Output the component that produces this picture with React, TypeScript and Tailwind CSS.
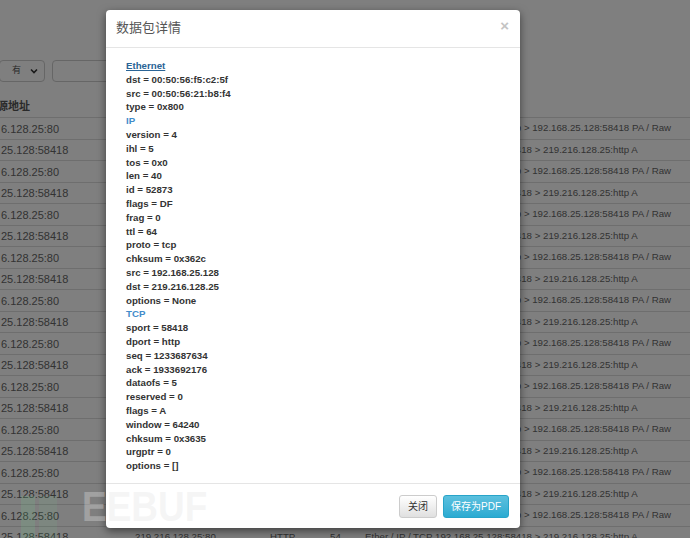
import React from "react";

const lines: { t: string; k?: "link" | "head" }[] = [
  { t: "Ethernet", k: "link" },
  { t: "dst = 00:50:56:f5:c2:5f" },
  { t: "src = 00:50:56:21:b8:f4" },
  { t: "type = 0x800" },
  { t: "IP", k: "head" },
  { t: "version = 4" },
  { t: "ihl = 5" },
  { t: "tos = 0x0" },
  { t: "len = 40" },
  { t: "id = 52873" },
  { t: "flags = DF" },
  { t: "frag = 0" },
  { t: "ttl = 64" },
  { t: "proto = tcp" },
  { t: "chksum = 0x362c" },
  { t: "src = 192.168.25.128" },
  { t: "dst = 219.216.128.25" },
  { t: "options = None" },
  { t: "TCP", k: "head" },
  { t: "sport = 58418" },
  { t: "dport = http" },
  { t: "seq = 1233687634" },
  { t: "ack = 1933692176" },
  { t: "dataofs = 5" },
  { t: "reserved = 0" },
  { t: "flags = A" },
  { t: "window = 64240" },
  { t: "chksum = 0x3635" },
  { t: "urgptr = 0" },
  { t: "options = []" },
];

function Row({ odd }: { odd: boolean }) {
  return (
    <div className="flex h-[21.5px] items-center border-b border-[#dddddd] whitespace-nowrap pt-[1px] text-[#666666]">
      <div className="w-[135px] overflow-hidden pl-[1px] text-[11px]">
        {odd ? "6.128.25:80" : "25.128:58418"}
      </div>
      <div className="w-[135px] overflow-hidden text-[9.7px]">
        {odd ? "192.168.25.128:58418" : "219.216.128.25:80"}
      </div>
      <div className="w-[60px] text-[9.7px]">HTTP</div>
      <div className="w-[35px] text-[9.7px]">{odd ? "1514" : "54"}</div>
      <div className="flex-1 text-[9.7px]">
        {odd
          ? "Ether / IP / TCP 219.216.128.25:http > 192.168.25.128:58418 PA / Raw"
          : "Ether / IP / TCP 192.168.25.128:58418 > 219.216.128.25:http A"}
      </div>
    </div>
  );
}

export default function App() {
  const rows = Array.from({ length: 20 }, (_, i) => i % 2 === 0);
  return (
    <div className="relative h-[538px] w-[690px] overflow-hidden bg-white font-['Liberation_Sans','Noto_Sans_CJK_SC',sans-serif]">
      {/* page behind the modal */}
      <div className="flex flex-col">
        <div className="h-[60px]" />
        <div className="flex h-[22px] items-center">
          <div className="ml-[-1px] flex h-[22px] w-[46px] items-center justify-between rounded-[4px] border border-[#cccccc] pl-[12px] pr-[6px]">
            <span className="text-[9px] text-[#555555]">有</span>
            <svg width="8" height="6" viewBox="0 0 8 6">
              <polyline points="1,1.5 4,4.5 7,1.5" fill="none" stroke="#333" strokeWidth="1.6" />
            </svg>
          </div>
          <div className="ml-[7px] h-[22px] w-[200px] rounded-[4px] border border-[#cccccc]" />
        </div>
        <div className="flex h-[36px] items-end border-b border-[#dddddd] pb-[5px]">
          <span className="ml-[-3px] text-[11px] font-bold leading-[12px] text-[#555555]">源地址</span>
        </div>
        {rows.map((odd, i) => (
          <Row key={i} odd={odd} />
        ))}
      </div>

      {/* backdrop */}
      <div className="absolute inset-0 bg-black/50" />

      {/* modal */}
      <div className="absolute left-[106px] top-[10px] flex h-[518px] w-[414px] flex-col rounded-[4px] bg-white shadow-[0_3px_9px_rgba(0,0,0,0.5)]">
        <div className="flex h-[38px] items-center justify-between border-b border-[#e5e5e5] pb-[3px] pl-[10px] pr-[11px]">
          <span className="text-[13px] leading-none text-[#555555]">数据包详情</span>
          <span className="mb-[3px] text-[15px] font-bold leading-none text-[#c4c4c4]">×</span>
        </div>
        <div className="flex-1 px-[20px] pb-[9px] pt-[11px] text-[9.7px] font-bold leading-[13.8px] text-[#333333]">
          {lines.map((l, i) => (
            <div
              key={i}
              className={
                l.k === "link"
                  ? "text-[#2a6496] underline"
                  : l.k === "head"
                  ? "text-[#428bca]"
                  : ""
              }
            >
              {l.t}
            </div>
          ))}
        </div>
        <div className="flex h-[45px] items-start justify-end gap-[6px] border-t border-[#e5e5e5] pr-[11px] pt-[11px]">
          <button className="flex h-[23px] w-[38px] items-center justify-center rounded-[3px] border border-[#cccccc] bg-linear-to-b from-white to-[#e0e0e0] text-[10px] text-[#333333]">
            关闭
          </button>
          <button className="flex h-[23px] w-[66px] items-center justify-center rounded-[3px] border border-[#28a4c9] bg-linear-to-b from-[#5bc0de] to-[#2aabd2] text-[10px] text-white">
            保存为PDF
          </button>
        </div>
      </div>

      {/* watermark */}
      <svg className="pointer-events-none absolute left-[15px] top-[492px]" width="48" height="46" viewBox="0 0 48 46">
        <rect x="6" y="4" width="14" height="42" fill="rgba(110,210,140,0.16)" />
        <rect x="24" y="4" width="18" height="42" fill="rgba(110,210,140,0.10)" />
      </svg>
      <div className="pointer-events-none absolute left-[82px] top-[491px] origin-bottom scale-y-[1.13] text-[37px] font-bold leading-none text-[#e4e4e45c]">
        EEBUF
      </div>
    </div>
  );
}
